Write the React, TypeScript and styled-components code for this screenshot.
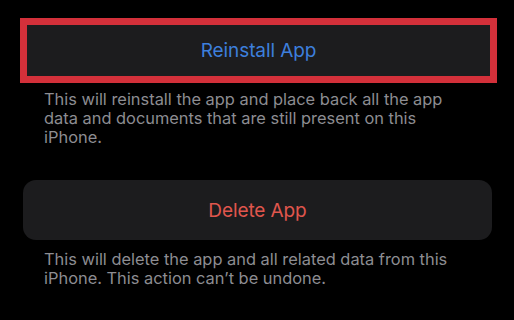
import React from "react";
import styled, { createGlobalStyle } from "styled-components";

const Global = createGlobalStyle`
  html, body { margin: 0; padding: 0; background: #000; }
  body { font-family: Inter, "Liberation Sans", sans-serif; -webkit-font-smoothing: antialiased; }
`;

const Page = styled.div`
  width: 514px;
  height: 320px;
  background: #000;
  box-sizing: border-box;
  padding: 18px 0 0 20px;
  display: flex;
  flex-direction: column;
`;

const Section = styled.section<{ $gap: number }>`
  display: flex;
  flex-direction: column;
  margin-bottom: ${(p) => p.$gap}px;
`;

const Highlight = styled.div`
  width: 477px;
  box-sizing: border-box;
  border: 7px solid #d3303a;
`;

const ActionButton = styled.button<{ $tone: "blue" | "red"; $rounded?: boolean; $height: number }>`
  display: flex;
  align-items: center;
  justify-content: center;
  width: 100%;
  height: ${(p) => p.$height}px;
  border: none;
  margin: 0;
  padding: 0;
  background: #1c1c1e;
  border-radius: ${(p) => (p.$rounded ? "13px" : "0")};
  color: ${(p) => (p.$tone === "blue" ? "#3d7fdc" : "#e0564d")};
  font-family: Inter, "Liberation Sans", sans-serif;
  font-size: 19px;
  font-weight: 400;
  letter-spacing: -0.1px;
  cursor: pointer;
`;

const DeleteWrap = styled.div`
  width: 469px;
  margin-left: 3px;
`;

const Footnote = styled.p<{ $top: number }>`
  margin: ${(p) => p.$top}px 0 0 24px;
  width: 416px;
  color: #8d8d92;
  font-size: 16.4px;
  line-height: 19px;
  letter-spacing: 0;
`;

export default function App() {
  return (
    <>
      <Global />
      <Page>
        <Section $gap={33}>
          <Highlight>
            <ActionButton $tone="blue" $height={51}>Reinstall App</ActionButton>
          </Highlight>
          <Footnote $top={7}>
            This will reinstall the app and place back all the app data and documents that are still present on this iPhone.
          </Footnote>
        </Section>
        <Section $gap={0}>
          <DeleteWrap>
            <ActionButton $tone="red" $rounded $height={60}>Delete App</ActionButton>
          </DeleteWrap>
          <Footnote $top={10}>
            This will delete the app and all related data from this iPhone. This action can’t be undone.
          </Footnote>
        </Section>
      </Page>
    </>
  );
}
